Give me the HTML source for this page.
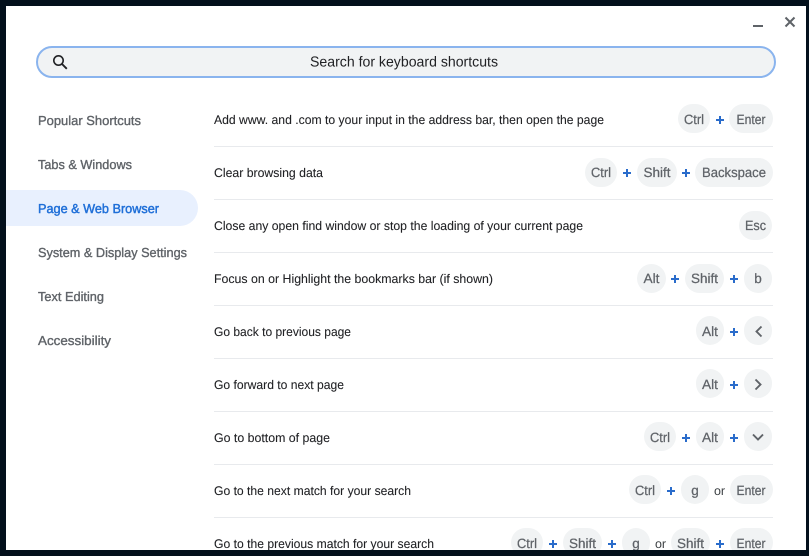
<!DOCTYPE html>
<html><head><meta charset="utf-8"><style>
html,body{margin:0;padding:0;width:809px;height:556px;overflow:hidden;background:#03101c}
svg{display:block;position:absolute;left:0;top:0}
text{font-family:"Liberation Sans",sans-serif;text-rendering:geometricPrecision}
.s{font-size:13px;fill:#5f6368;stroke:#5f6368;stroke-width:.35}
.a{font-size:13px;fill:#1f6fd8;stroke:#1f6fd8;stroke-width:.45}
.r{font-size:12.5px;fill:#202124;stroke:#202124;stroke-width:.08}
.k{font-size:13.5px;fill:#5f6368;stroke:#5f6368;stroke-width:.25;text-anchor:middle}
.o{font-size:12.5px;fill:#3c4043;text-anchor:middle}
.b{fill:#f1f3f4}
.p{stroke:#2a6ccb;stroke-width:2;fill:none}
.l{stroke:#e8eaed;stroke-width:1}
.c{stroke:#5f6368;stroke-width:1.9;fill:none}
</style></head><body>
<svg width="809" height="556" viewBox="0 0 809 556" xmlns="http://www.w3.org/2000/svg">
<defs><clipPath id="w"><rect x="6" y="6" width="800" height="544"/></clipPath></defs>
<rect width="809" height="556" fill="#03101c"/>
<g clip-path="url(#w)">
<rect x="6" y="6" width="800" height="544" fill="#fff"/>
<path d="M753 26h10" stroke="#5f6368" stroke-width="2"/>
<path d="M785.500 17.500l9 9M794.500 17.500l-9 9" stroke="#5f6368" stroke-width="2"/>
<rect x="37" y="47" width="738" height="30" rx="15" fill="#f1f3f4" stroke="#8ab4ee" stroke-width="2"/>
<circle cx="58.500" cy="60.500" r="4.700" fill="none" stroke="#202124" stroke-width="1.600"/>
<path d="M62 64l4.800 4.800" stroke="#202124" stroke-width="1.900"/>
<text x="310" y="66.500" font-size="14.500" fill="#202124" textLength="188" lengthAdjust="spacingAndGlyphs">Search for keyboard shortcuts</text>

<path d="M6 190H180a18 18 0 0 1 0 36H6z" fill="#e8f0fe"/>
<text class="s" x="38" y="125" textLength="103" lengthAdjust="spacingAndGlyphs">Popular Shortcuts</text>
<text class="s" x="38" y="169" textLength="94" lengthAdjust="spacingAndGlyphs">Tabs &amp; Windows</text>
<text class="a" x="38" y="213" textLength="121" lengthAdjust="spacingAndGlyphs">Page &amp; Web Browser</text>
<text class="s" x="38" y="257" textLength="149" lengthAdjust="spacingAndGlyphs">System &amp; Display Settings</text>
<text class="s" x="38" y="301" textLength="66" lengthAdjust="spacingAndGlyphs">Text Editing</text>
<text class="s" x="38" y="345" textLength="73" lengthAdjust="spacingAndGlyphs">Accessibility</text>

<path class="l" d="M214 146.500H773M214 199.500H773M214 252.500H773M214 305.500H773M214 358.500H773M214 411.500H773M214 464.500H773M214 517.500H773"/>

<text class="r" x="214" y="124" textLength="390" lengthAdjust="spacingAndGlyphs">Add www. and .com to your input in the address bar, then open the page</text>
<text class="r" x="214" y="177" textLength="109" lengthAdjust="spacingAndGlyphs">Clear browsing data</text>
<text class="r" x="214" y="230" textLength="369" lengthAdjust="spacingAndGlyphs">Close any open find window or stop the loading of your current page</text>
<text class="r" x="214" y="283" textLength="279" lengthAdjust="spacingAndGlyphs">Focus on or Highlight the bookmarks bar (if shown)</text>
<text class="r" x="214" y="336" textLength="137" lengthAdjust="spacingAndGlyphs">Go back to previous page</text>
<text class="r" x="214" y="389" textLength="130" lengthAdjust="spacingAndGlyphs">Go forward to next page</text>
<text class="r" x="214" y="442" textLength="116" lengthAdjust="spacingAndGlyphs">Go to bottom of page</text>
<text class="r" x="214" y="495" textLength="197" lengthAdjust="spacingAndGlyphs">Go to the next match for your search</text>
<text class="r" x="214" y="548" textLength="220" lengthAdjust="spacingAndGlyphs">Go to the previous match for your search</text>

<!-- row 1 -->
<rect class="b" x="678" y="104" width="32" height="29" rx="14.500"/><text class="k" x="694" y="124" textLength="20" lengthAdjust="spacingAndGlyphs">Ctrl</text>
<path class="p" d="M716 120h8M720 116v8"/>
<rect class="b" x="729" y="104" width="44" height="29" rx="14.500"/><text class="k" x="751" y="124" textLength="29" lengthAdjust="spacingAndGlyphs">Enter</text>
<!-- row 2 -->
<rect class="b" x="585" y="158" width="32" height="29" rx="14.500"/><text class="k" x="601" y="177" textLength="20" lengthAdjust="spacingAndGlyphs">Ctrl</text>
<path class="p" d="M623 173h8M627 169v8"/>
<rect class="b" x="637" y="158" width="40" height="29" rx="14.500"/><text class="k" x="657" y="177" textLength="27" lengthAdjust="spacingAndGlyphs">Shift</text>
<path class="p" d="M682 173h8M686 169v8"/>
<rect class="b" x="695" y="158" width="78" height="29" rx="14.500"/><text class="k" x="734" y="177" textLength="64" lengthAdjust="spacingAndGlyphs">Backspace</text>
<!-- row 3 -->
<rect class="b" x="739" y="211" width="33" height="29" rx="14.500"/><text class="k" x="755.500" y="230" textLength="21" lengthAdjust="spacingAndGlyphs">Esc</text>
<!-- row 4 -->
<rect class="b" x="637" y="264" width="29" height="29" rx="14.500"/><text class="k" x="651.500" y="283" textLength="16" lengthAdjust="spacingAndGlyphs">Alt</text>
<path class="p" d="M671 279h8M675 275v8"/>
<rect class="b" x="685" y="264" width="39" height="29" rx="14.500"/><text class="k" x="704.500" y="283" textLength="27" lengthAdjust="spacingAndGlyphs">Shift</text>
<path class="p" d="M730 279h8M734 275v8"/>
<rect class="b" x="744" y="264" width="28" height="29" rx="14"/><text class="k" x="758" y="283">b</text>
<!-- row 5 -->
<rect class="b" x="696" y="316" width="28" height="29" rx="14"/><text class="k" x="710" y="336" textLength="16" lengthAdjust="spacingAndGlyphs">Alt</text>
<path class="p" d="M730 332h8M734 328v8"/>
<rect class="b" x="744" y="316" width="28" height="29" rx="14"/>
<path class="c" d="M761.500 326.500l-5 5 5 5"/>
<!-- row 6 -->
<rect class="b" x="696" y="369" width="28" height="29" rx="14"/><text class="k" x="710" y="389" textLength="16" lengthAdjust="spacingAndGlyphs">Alt</text>
<path class="p" d="M730 385h8M734 381v8"/>
<rect class="b" x="744" y="369" width="28" height="29" rx="14"/>
<path class="c" d="M755.500 379.500l5 5-5 5"/>
<!-- row 7 -->
<rect class="b" x="644" y="422" width="32" height="29" rx="14.500"/><text class="k" x="660" y="442" textLength="20" lengthAdjust="spacingAndGlyphs">Ctrl</text>
<path class="p" d="M682 438h8M686 434v8"/>
<rect class="b" x="696" y="422" width="28" height="29" rx="14"/><text class="k" x="710" y="442" textLength="16" lengthAdjust="spacingAndGlyphs">Alt</text>
<path class="p" d="M730 438h8M734 434v8"/>
<rect class="b" x="744" y="422" width="28" height="29" rx="14"/>
<path class="c" d="M753 434.500l5 5 5-5"/>
<!-- row 8 -->
<rect class="b" x="629" y="475" width="32" height="29" rx="14.500"/><text class="k" x="645" y="495" textLength="20" lengthAdjust="spacingAndGlyphs">Ctrl</text>
<path class="p" d="M667 491h8M671 487v8"/>
<rect class="b" x="681" y="475" width="28" height="29" rx="14"/><text class="k" x="695" y="495">g</text>
<text class="o" x="719.500" y="495">or</text>
<rect class="b" x="730" y="475" width="43" height="29" rx="14.500"/><text class="k" x="751" y="495" textLength="29" lengthAdjust="spacingAndGlyphs">Enter</text>
<!-- row 9 -->
<rect class="b" x="511" y="528" width="32" height="29" rx="14.500"/><text class="k" x="527" y="548" textLength="20" lengthAdjust="spacingAndGlyphs">Ctrl</text>
<path class="p" d="M549 544h8M553 540v8"/>
<rect class="b" x="563" y="528" width="39" height="29" rx="14.500"/><text class="k" x="582.500" y="548" textLength="27" lengthAdjust="spacingAndGlyphs">Shift</text>
<path class="p" d="M608 544h8M612 540v8"/>
<rect class="b" x="622" y="528" width="28" height="29" rx="14"/><text class="k" x="636" y="548">g</text>
<text class="o" x="660.500" y="548">or</text>
<rect class="b" x="671" y="528" width="39" height="29" rx="14.500"/><text class="k" x="690.500" y="548" textLength="27" lengthAdjust="spacingAndGlyphs">Shift</text>
<path class="p" d="M716 544h8M720 540v8"/>
<rect class="b" x="730" y="528" width="43" height="29" rx="14.500"/><text class="k" x="751" y="548" textLength="29" lengthAdjust="spacingAndGlyphs">Enter</text>
</g>
</svg>
</body></html>
